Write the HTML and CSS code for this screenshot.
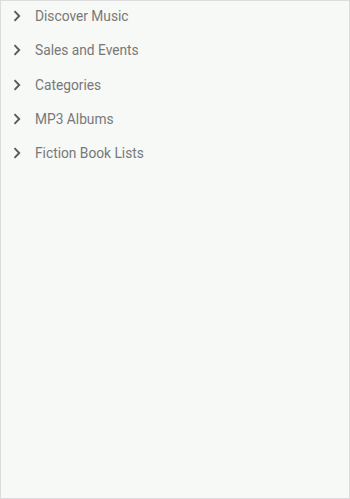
FILE: index.html
```html
<!DOCTYPE html>
<html>
<head>
<meta charset="utf-8">
<link rel="stylesheet" href="styles.css">
</head>
<body>
<div class="panel">
  <ul class="tree">
    <li class="node"><svg class="chev" viewBox="0 0 12 12"><path d="M3.5 1.2 L8.2 6 L3.5 10.8"/></svg><span class="label">Discover Music</span></li>
    <li class="node"><svg class="chev" viewBox="0 0 12 12"><path d="M3.5 1.2 L8.2 6 L3.5 10.8"/></svg><span class="label">Sales and Events</span></li>
    <li class="node"><svg class="chev" viewBox="0 0 12 12"><path d="M3.5 1.2 L8.2 6 L3.5 10.8"/></svg><span class="label">Categories</span></li>
    <li class="node"><svg class="chev" viewBox="0 0 12 12"><path d="M3.5 1.2 L8.2 6 L3.5 10.8"/></svg><span class="label">MP3 Albums</span></li>
    <li class="node"><svg class="chev" viewBox="0 0 12 12"><path d="M3.5 1.2 L8.2 6 L3.5 10.8"/></svg><span class="label">Fiction Book Lists</span></li>
  </ul>
</div>
</body>
</html>
```
FILE: styles.css
```css
html, body {
  margin: 0;
  padding: 0;
  background: #ffffff;
}
.panel {
  box-sizing: border-box;
  width: 350px;
  height: 499px;
  border: 1px solid #dcdcdc;
  background: #f7f9f6;
  font-family: Roboto, "Liberation Sans", sans-serif;
}
.tree {
  list-style: none;
  margin: 0;
  padding: 0;
}
.node {
  display: flex;
  align-items: center;
  height: 34.25px;
  padding: 0 0 4px 0;
  box-sizing: border-box;
}
.chev {
  width: 12px;
  height: 12px;
  margin-left: 10px;
  margin-right: 12px;
  fill: none;
  stroke: #5a5a5a;
  stroke-width: 1.9;
}
.label {
  font-size: 13.75px;
  line-height: 16px;
  color: #787878;
}
```
